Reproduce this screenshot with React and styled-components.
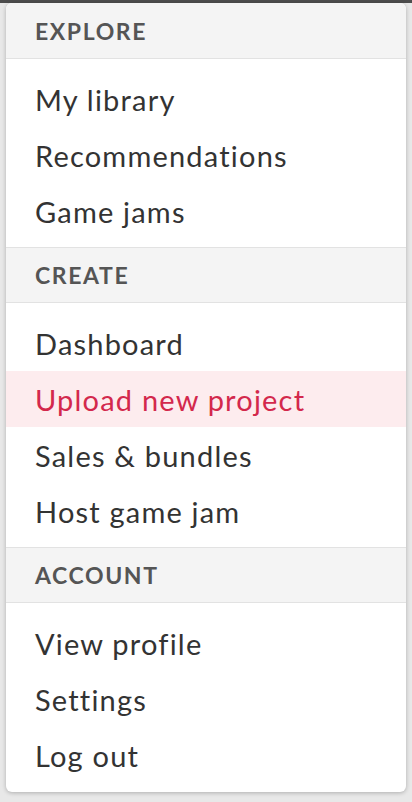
import styled, { createGlobalStyle } from 'styled-components';

const GlobalStyle = createGlobalStyle`
    html, body{
        margin: 0;
        padding: 0;
    }
    body{
        background: linear-gradient(#4d4d4d 0 3px, #e8e8e8 3px);
        font-family: Lato, "Open Sans", sans-serif;
        min-height: 802px;
    }
`

const Menu = styled.nav`
    background: #fff;
    border-radius: 6px;
    box-shadow: 0 1px 4px rgba(0, 0, 0, 0.25);
    margin: 3px 6px 0;
    overflow: hidden;
    padding-bottom: 1px;
`

const Header = styled.div`
    align-items: center;
    background: #f4f4f4;
    border-bottom: 1px solid #e2e2e2;
    border-top: ${p => p.$first ? 'none' : '1px solid #e2e2e2'};
    color: #555;
    display: flex;
    font-size: 23px;
    font-weight: 700;
    height: ${p => p.$first ? '55px' : '54px'};
    letter-spacing: 1.6px;
    padding: 0 29px;
    text-transform: uppercase;
`

const List = styled.ul`
    list-style: none;
    margin: 0;
    padding: 12px 0 8px;
`

const Item = styled.li`
    align-items: center;
    background: ${p => p.$active ? '#fdecee' : 'transparent'};
    color: ${p => p.$active ? '#d3284c' : '#333'};
    display: flex;
    font-size: 29px;
    height: 56px;
    letter-spacing: 1.2px;
    padding: 0 29px;
`

const sections = [
    { title: 'Explore', items: ['My library', 'Recommendations', 'Game jams'] },
    { title: 'Create', items: ['Dashboard', 'Upload new project', 'Sales & bundles', 'Host game jam'] },
    { title: 'Account', items: ['View profile', 'Settings', 'Log out'] },
]

export default function App(){
    return(
        <>
            <GlobalStyle/>
            <Menu>
                {sections.map((s, i) => (
                    <section key={s.title}>
                        <Header $first={i === 0}>{s.title}</Header>
                        <List>
                            {s.items.map(item => (
                                <Item key={item} $active={item === 'Upload new project'}>{item}</Item>
                            ))}
                        </List>
                    </section>
                ))}
            </Menu>
        </>
    )
}
